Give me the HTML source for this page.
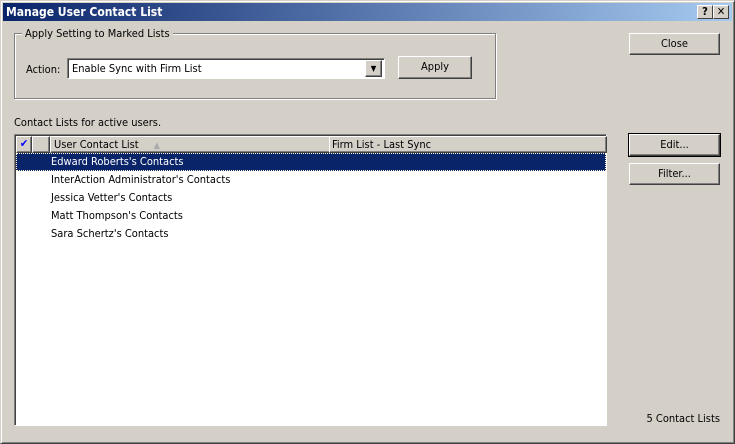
<html><head><style>
body{margin:0;width:735px;height:444px;overflow:hidden;background:#d4d0c8;font:11px Tahoma,"DejaVu Sans Condensed","Liberation Sans",sans-serif;position:relative}
.a{position:absolute}
.win{left:0;top:0;width:733px;height:442px;border:1px solid;border-color:#d4d0c8 #404040 #404040 #d4d0c8;box-shadow:inset 1px 1px #fff,inset -1px -1px #808080}
.title{left:3px;top:3px;width:729px;height:18px;background:linear-gradient(90deg,#0a246a,#a6caf0);color:#fff;font-weight:bold;font-size:12px;line-height:18px;text-indent:3px}
.tb{top:5px;width:14px;height:12px;background:#d4d0c8;border:1px solid;border-color:#fff #404040 #404040 #fff;color:#000;font-weight:bold;font-size:11px;line-height:12px;text-align:center}
.btn{background:#d4d0c8;border:1px solid;border-color:#fff #404040 #404040 #fff;box-shadow:inset -1px -1px #808080;text-align:center;line-height:20px}
.grp{left:14px;top:33px;width:480px;height:64px;border:1px solid #808080;box-shadow:1px 1px #fff,inset 1px 1px #fff}
.sunk{border:1px solid;border-color:#808080 #fff #fff #808080;box-shadow:inset 1px 1px #404040}
.row{left:51px;height:18px;line-height:17px}
</style></head><body>
<div class="a win"></div>
<div class="a title">Manage User Contact List</div>
<div class="a tb" style="left:697px">?</div>
<div class="a tb" style="left:713px">✕</div>
<div class="a grp"></div>
<div class="a" style="left:22px;top:27px;padding:0 3px;background:#d4d0c8">Apply Setting to Marked Lists</div>
<div class="a" style="left:26px;top:63px">Action:</div>
<div class="a sunk" style="left:67px;top:58px;width:316px;height:19px;background:#fff"></div>
<div class="a" style="left:72px;top:62px">Enable Sync with Firm List</div>
<div class="a btn" style="left:365px;top:60px;width:15px;height:15px;line-height:15px;font-size:8px">▼</div>
<div class="a btn" style="left:398px;top:56px;width:72px;height:21px">Apply</div>
<div class="a btn" style="left:629px;top:33px;width:89px;height:20px">Close</div>
<div class="a" style="left:14px;top:116px">Contact Lists for active users.</div>
<div class="a sunk" style="left:14px;top:134px;width:591px;height:290px;background:#fff"></div>
<div class="a btn" style="left:16px;top:136px;width:14px;height:15px;line-height:14px;color:#00f;font-weight:bold">✔</div>
<div class="a btn" style="left:32px;top:136px;width:16px;height:15px"></div>
<div class="a btn" style="left:50px;top:136px;width:276px;height:15px;text-align:left;line-height:15px;padding-left:3px">User Contact List <span style="color:#aaa;margin-left:12px;font-size:9px">▲</span></div>
<div class="a btn" style="left:329px;top:136px;width:274px;height:15px;text-align:left;line-height:15px;padding-left:2px">Firm List - Last Sync</div>
<div class="a" style="left:16px;top:153px;width:588px;height:16px;background:#0a246a;border:1px dotted #ffd"></div>
<div class="a row" style="top:153px;color:#fff">Edward Roberts's Contacts</div>
<div class="a row" style="top:171px">InterAction Administrator's Contacts</div>
<div class="a row" style="top:189px">Jessica Vetter's Contacts</div>
<div class="a row" style="top:207px">Matt Thompson's Contacts</div>
<div class="a row" style="top:225px">Sara Schertz's Contacts</div>
<div class="a btn" style="left:629px;top:134px;width:89px;height:20px;outline:1px solid #000">Edit...</div>
<div class="a btn" style="left:629px;top:163px;width:89px;height:20px">Filter...</div>
<div class="a" style="right:15px;top:412px">5 Contact Lists</div>
</body></html>
